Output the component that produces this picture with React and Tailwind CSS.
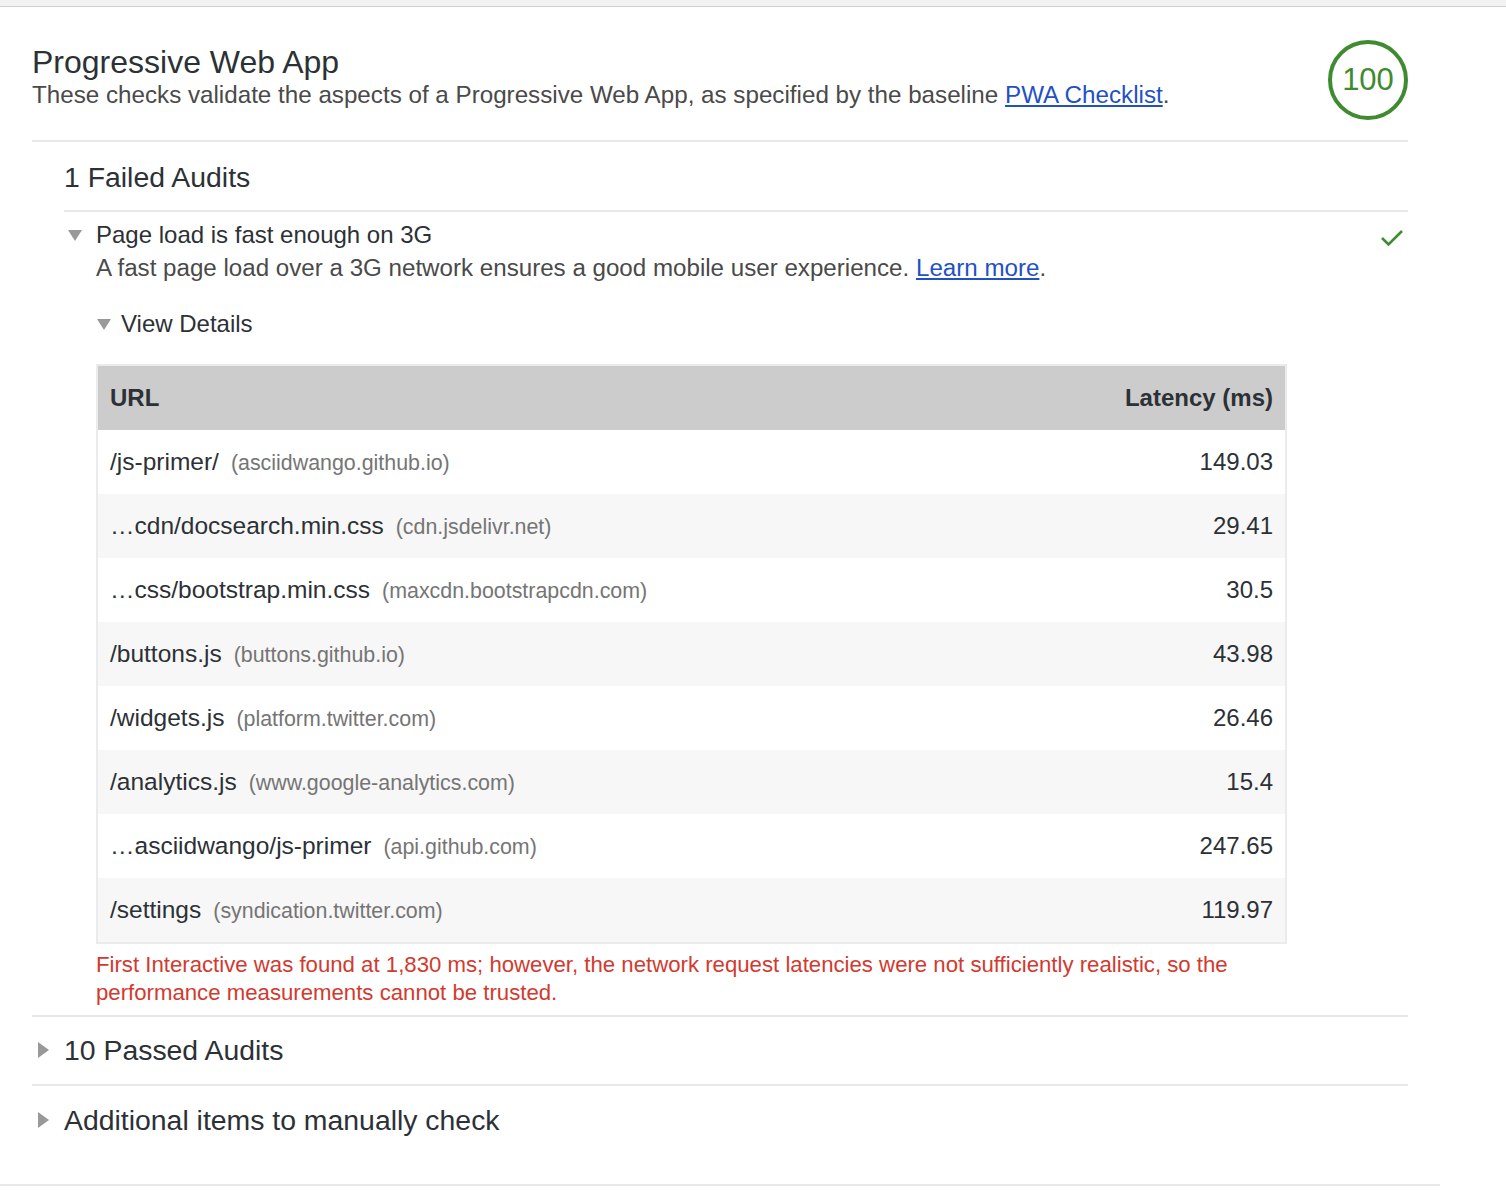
import React from "react";

const rows = [
  { url: "/js-primer/", host: "asciidwango.github.io", ms: "149.03" },
  { url: "…cdn/docsearch.min.css", host: "cdn.jsdelivr.net", ms: "29.41" },
  { url: "…css/bootstrap.min.css", host: "maxcdn.bootstrapcdn.com", ms: "30.5" },
  { url: "/buttons.js", host: "buttons.github.io", ms: "43.98" },
  { url: "/widgets.js", host: "platform.twitter.com", ms: "26.46" },
  { url: "/analytics.js", host: "www.google-analytics.com", ms: "15.4" },
  { url: "…asciidwango/js-primer", host: "api.github.com", ms: "247.65" },
  { url: "/settings", host: "syndication.twitter.com", ms: "119.97" },
];

function TriangleDown({ className }) {
  return (
    <svg width="14" height="11" viewBox="0 0 14 11" className={className}>
      <polygon points="0,0 14,0 7,11" fill="#999999" />
    </svg>
  );
}

function TriangleRight({ className }) {
  return (
    <svg width="11" height="16" viewBox="0 0 11 16" className={className}>
      <polygon points="0,0 11,8 0,16" fill="#999999" />
    </svg>
  );
}

export default function App() {
  return (
    <div className="min-h-screen bg-white font-['Liberation_Sans',Arial,sans-serif]">
      <div className="h-[7px] bg-[#f2f2f2] border-b border-[#cfcfcf]" />

      <div className="w-[1440px] px-8 pb-[48px] border-b-2 border-[#e8e8e8]">
        {/* header */}
        <div className="flex items-start justify-between pt-[33px] pb-[20px] border-b-2 border-[#e8e8e8]">
          <div className="mt-[3px]">
            <h1 className="text-[32px] leading-[38px] text-[#2c3136]">Progressive Web App</h1>
            <p className="text-[24.2px] leading-[28px] text-[#4a4a4a]">
              These checks validate the aspects of a Progressive Web App, as specified by the baseline{" "}
              <a className="text-[#1f51c5] underline">PWA Checklist</a>.
            </p>
          </div>
          <div className="w-20 h-20 rounded-full border-4 border-[#3f8b30] flex items-center justify-center text-[31px] text-[#3f8b30]">
            100
          </div>
        </div>

        {/* failed audits */}
        <div className="pl-8 border-b-2 border-[#e8e8e8]">
          <div className="pt-[19px] pb-[17px] border-b-2 border-[#e8e8e8] text-[28.4px] leading-[32px] text-[#2c3136]">
            1 Failed Audits
          </div>

          <div className="flex pt-[7px]">
            <div className="w-8 pt-[11px]">
              <TriangleDown className="ml-1" />
            </div>
            <div className="flex-1">
              <div className="flex items-start justify-between">
                <div className="text-[24px] leading-[32px] text-[#2c3136]">Page load is fast enough on 3G</div>
                <svg width="24" height="18" viewBox="0 0 24 18" className="mt-[10px] mr-[4px]">
                  <polyline points="2,9 8.5,15.5 22,2" fill="none" stroke="#3f8b30" strokeWidth="2.6" />
                </svg>
              </div>
              <p className="text-[24.15px] leading-[33px] text-[#4a4a4a]">
                A fast page load over a 3G network ensures a good mobile user experience.{" "}
                <a className="text-[#1f51c5] underline">Learn more</a>.
              </p>

              <div className="flex items-center mt-[24px]">
                <TriangleDown className="ml-[1px] mr-[10px]" />
                <span className="text-[24px] leading-[32px] text-[#2c3136]">View Details</span>
              </div>

              <table className="mt-[24px] w-[1191px] border-2 border-[#ebebeb] border-separate border-spacing-0 text-[#2c3136]">
                <thead>
                  <tr className="bg-[#cccccc] h-16">
                    <th className="text-left px-3 text-[24px] font-bold">URL</th>
                    <th className="text-right px-3 text-[24px] font-bold">Latency (ms)</th>
                  </tr>
                </thead>
                <tbody>
                  {rows.map((r, i) => (
                    <tr key={r.url} className={i % 2 === 1 ? "h-16 bg-[#f7f7f7]" : "h-16 bg-white"}>
                      <td className="px-3 text-left">
                        <span className="text-[24.5px]">{r.url}</span>
                        <span className="ml-3 text-[21.4px] text-[#757575]">({r.host})</span>
                      </td>
                      <td className="px-3 text-right text-[24px]">{r.ms}</td>
                    </tr>
                  ))}
                </tbody>
              </table>

              <p className="mt-[7px] mb-[8px] w-[1191px] text-[22.2px] leading-[28px] text-[#d23a2f]">
                First Interactive was found at 1,830 ms; however, the network request latencies were not sufficiently
                realistic, so the performance measurements cannot be trusted.
              </p>
            </div>
          </div>
        </div>

        <div className="flex items-center border-b-2 border-[#e8e8e8] pt-[17px] pb-[18px]">
          <div className="w-8 flex items-center">
            <TriangleRight className="ml-[6px]" />
          </div>
          <div className="text-[28.4px] leading-[32px] text-[#2c3136]">10 Passed Audits</div>
        </div>
        <div className="flex items-center pt-[18px]">
          <div className="w-8 flex items-center">
            <TriangleRight className="ml-[6px]" />
          </div>
          <div className="text-[28.4px] leading-[32px] text-[#2c3136]">Additional items to manually check</div>
        </div>
      </div>
    </div>
  );
}
